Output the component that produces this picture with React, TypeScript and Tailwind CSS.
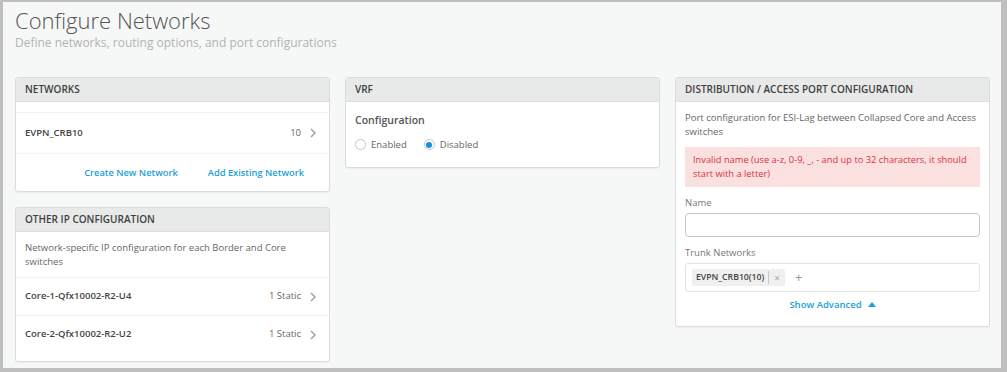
import React from 'react';

const font = { fontFamily: '"Open Sans", "Liberation Sans", sans-serif' };

function Chevron() {
  return (
    <svg width="6" height="10" viewBox="0 0 6 10" className="ml-[9px]">
      <path d="M1 1 L5 5 L1 9" fill="none" stroke="#a0a0a0" strokeWidth="1.5" />
    </svg>
  );
}

function CardHeader({ title }: { title: string }) {
  return (
    <div className="h-[24px] flex items-center px-[9px] bg-[#e8e9e9] border-b border-[#dedede] rounded-t-[3px]">
      <span className="text-[10px] font-semibold text-[#3f3f3f]">{title}</span>
    </div>
  );
}

function Radio({ checked, label }: { checked: boolean; label: string }) {
  return (
    <label className="flex items-center gap-[5px]">
      <span
        className={`w-[11px] h-[11px] rounded-full border flex items-center justify-center bg-white ${
          checked ? 'border-[#b8c9d6]' : 'border-[#c4c4c4]'
        }`}
      >
        {checked && <span className="w-[6px] h-[6px] rounded-full bg-[#1b8fd8]" />}
      </span>
      <span className="text-[9.5px] leading-[15px] text-[#666]">{label}</span>
    </label>
  );
}

export default function App() {
  return (
    <div style={font} className="w-[1007px] h-[372px] bg-[#bfbfbf] pl-[3px] pt-[2px] pr-[6px] pb-[4px]">
      <div className="w-full h-full bg-[#f6f8f7] pl-[12px] overflow-hidden">
        <h1 className="text-[22px] leading-[28px] font-light text-[#555] pt-[4px]">Configure Networks</h1>
        <p className="text-[12px] leading-[16px] text-[#b1b3b2] mt-[1px]">Define networks, routing options, and port configurations</p>

        <div className="flex items-start gap-[15px] mt-[26px]">
          {/* Left column */}
          <div className="w-[315px] flex flex-col gap-[15px]">
            <div className="bg-white border border-[#dcdcdc] rounded-[3px] shadow-[0_1px_1px_rgba(0,0,0,0.04)]">
              <CardHeader title="NETWORKS" />
              <div className="h-[11px] border-b border-[#f2f2f2]" />
              <div className="h-[41px] flex items-center justify-between pl-[9px] pr-[13px] border-b border-[#f4f4f4]">
                <span className="text-[9.5px] font-semibold text-[#444]">EVPN_CRB10</span>
                <span className="flex items-center text-[9.5px] text-[#666]">
                  10
                  <Chevron />
                </span>
              </div>
              <div className="h-[37px] flex items-center justify-end gap-[30px] pr-[25px]">
                <span className="text-[9.3px] font-semibold text-[#1a9fd6]">Create New Network</span>
                <span className="text-[9.3px] font-semibold text-[#1a9fd6]">Add Existing Network</span>
              </div>
            </div>

            <div className="bg-white border border-[#dcdcdc] rounded-[3px] shadow-[0_1px_1px_rgba(0,0,0,0.04)]">
              <CardHeader title="OTHER IP CONFIGURATION" />
              <p className="px-[9px] pt-[9px] pb-[8px] text-[9.5px] leading-[14px] text-[#666] border-b border-[#f4f4f4]">
                Network-specific IP configuration for each Border and Core switches
              </p>
              <div className="h-[38px] flex items-center justify-between pl-[9px] pr-[13px] border-b border-[#f2f2f2]">
                <span className="text-[9.5px] font-semibold text-[#444]">Core-1-Qfx10002-R2-U4</span>
                <span className="flex items-center text-[9.5px] text-[#666]">
                  1 Static
                  <Chevron />
                </span>
              </div>
              <div className="h-[37px] flex items-center justify-between pl-[9px] pr-[13px]">
                <span className="text-[9.5px] font-semibold text-[#444]">Core-2-Qfx10002-R2-U2</span>
                <span className="flex items-center text-[9.5px] text-[#666]">
                  1 Static
                  <Chevron />
                </span>
              </div>
              <div className="h-[8px]" />
            </div>
          </div>

          {/* Middle column */}
          <div className="w-[315px]">
            <div className="bg-white border border-[#dcdcdc] rounded-[3px] shadow-[0_1px_1px_rgba(0,0,0,0.04)]">
              <CardHeader title="VRF" />
              <div className="px-[9px] pt-[10px] pb-[15px]">
                <div className="text-[10.5px] font-semibold text-[#555] leading-[16px]">Configuration</div>
                <div className="flex items-center gap-[17px] mt-[9px]">
                  <Radio checked={false} label="Enabled" />
                  <Radio checked={true} label="Disabled" />
                </div>
              </div>
            </div>
          </div>

          {/* Right column */}
          <div className="w-[315px]">
            <div className="bg-white border border-[#dcdcdc] rounded-[3px] shadow-[0_1px_1px_rgba(0,0,0,0.04)]">
              <CardHeader title="DISTRIBUTION / ACCESS PORT CONFIGURATION" />
              <div className="px-[9px] pt-[9px] pb-[14px]">
                <p className="text-[9.5px] leading-[14px] text-[#666]">
                  Port configuration for ESI-Lag between Collapsed Core and Access switches
                </p>
                <div className="mt-[8px] bg-[#fbe0e0] px-[8px] py-[6px] text-[9.3px] leading-[14px] text-[#d8333f]">
                  Invalid name (use a-z, 0-9, _, - and up to 32 characters, it should start with a letter)
                </div>
                <div className="mt-[10px] text-[9.5px] leading-[12px] text-[#777]">Name</div>
                <div className="mt-[4px] h-[24px] rounded-[4px] border border-[#c6c6c6] bg-white" />
                <div className="mt-[10px] text-[9.5px] leading-[12px] text-[#777]">Trunk Networks</div>
                <div className="mt-[4px] h-[29px] rounded-[3px] border border-[#e2e2e2] bg-white flex items-center px-[6px]">
                  <span className="h-[17px] flex items-center bg-[#f0f0f0] rounded-[2px]">
                    <span className="pl-[4px] pr-[4px] text-[8.7px] font-semibold text-[#444] border-r border-[#c8c8c8] leading-[13px]">EVPN_CRB10(10)</span>
                    <span className="px-[5px] text-[10px] text-[#aaa] leading-none">×</span>
                  </span>
                  <span className="ml-[10px] text-[13px] text-[#999] leading-none">+</span>
                </div>
                <div className="mt-[5px] flex items-center justify-center gap-[6px]">
                  <span className="text-[9.5px] leading-[15px] font-semibold text-[#1a9fd6]">Show Advanced</span>
                  <svg width="8" height="5" viewBox="0 0 8 5">
                    <path d="M0 5 L4 0 L8 5 Z" fill="#1a9fd6" />
                  </svg>
                </div>
              </div>
            </div>
          </div>
        </div>
      </div>
    </div>
  );
}
